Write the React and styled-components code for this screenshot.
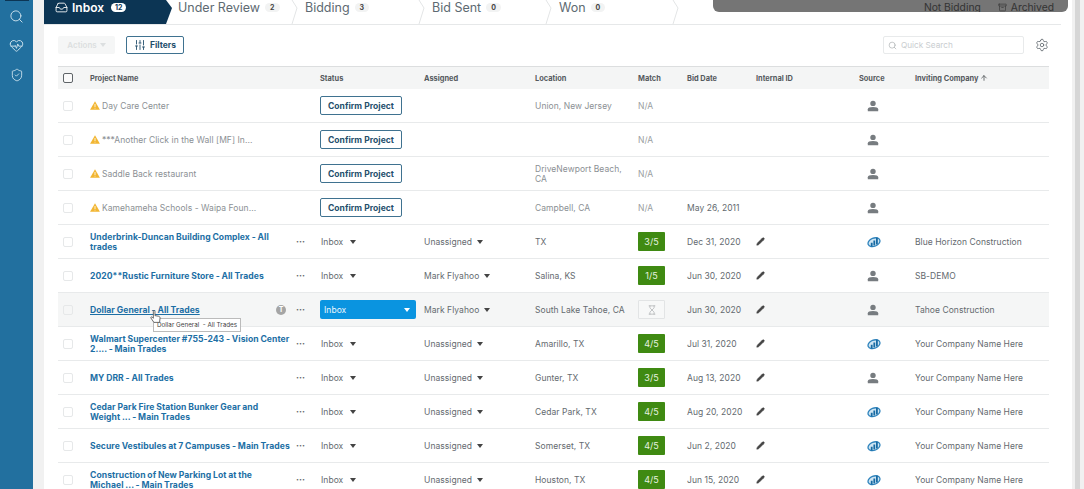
import React from 'react';
import styled, { createGlobalStyle } from 'styled-components';
import { Search, HeartPulse, ShieldCheck, Inbox, SlidersVertical, Settings, Archive, Pencil, Hourglass, ArrowUp } from 'lucide-react';

const GlobalStyle = createGlobalStyle`
  html, body {
    margin: 0;
    height: 100%;
    overflow: hidden;
    background: #f1f1f1;
    font-family: Inter, "Open Sans", sans-serif;
  }
`;

const rowsData = [
  { name: 'Day Care Center', pending: true, location: 'Union, New Jersey', match: 'N/A', source: 'user' },
  { name: '***Another Click in the Wall [MF] In...', pending: true, match: 'N/A', source: 'user' },
  { name: 'Saddle Back restaurant', pending: true, location: 'DriveNewport Beach,\nCA', match: 'N/A', source: 'user' },
  { name: 'Kamehameha Schools - Waipa Foun...', pending: true, location: 'Campbell, CA', match: 'N/A', date: 'May 26, 2011', source: 'user' },
  { name: 'Underbrink-Duncan Building Complex - All\ntrades', assigned: 'Unassigned', location: 'TX', match: '3/5', date: 'Dec 31, 2020', source: 'logo', company: 'Blue Horizon Construction' },
  { name: '2020**Rustic Furniture Store - All Trades', assigned: 'Mark Flyahoo', location: 'Salina, KS', match: '1/5', date: 'Jun 30, 2020', source: 'user', company: 'SB-DEMO' },
  { name: 'Dollar General - All Trades', hovered: true, assigned: 'Mark Flyahoo', location: 'South Lake Tahoe, CA', match: 'wait', date: 'Jun 30, 2020', source: 'user', company: 'Tahoe Construction' },
  { name: 'Walmart Supercenter #755-243 - Vision Center\n2.... - Main Trades', assigned: 'Unassigned', location: 'Amarillo, TX', match: '4/5', date: 'Jul 31, 2020', source: 'logo', company: 'Your Company Name Here' },
  { name: 'MY DRR - All Trades', assigned: 'Unassigned', location: 'Gunter, TX', match: '3/5', date: 'Aug 13, 2020', source: 'user', company: 'Your Company Name Here' },
  { name: 'Cedar Park Fire Station Bunker Gear and\nWeight ... - Main Trades', assigned: 'Unassigned', location: 'Cedar Park, TX', match: '4/5', date: 'Aug 20, 2020', source: 'logo', company: 'Your Company Name Here' },
  { name: 'Secure Vestibules at 7 Campuses - Main Trades', assigned: 'Unassigned', location: 'Somerset, TX', match: '4/5', date: 'Jun 2, 2020', source: 'logo', company: 'Your Company Name Here' },
  { name: 'Construction of New Parking Lot at the\nMichael ... - Main Trades', assigned: 'Unassigned', location: 'Houston, TX', match: '4/5', date: 'Jun 15, 2020', source: 'logo', company: 'Your Company Name Here' },
];

const tabsData = [
  { label: 'Under Review', count: 2 },
  { label: 'Bidding', count: 3 },
  { label: 'Bid Sent', count: 0 },
  { label: 'Won', count: 0 },
];

const columns = '32px 206px 24px 104px 111px 103px 49px 69px 103px 56px 1fr';

const Page = styled.div`
  display: flex;
  width: 1084px;
  height: 489px;
  overflow: hidden;
  position: relative;
`;

const Sidebar = styled.nav`
  width: 33px;
  flex: none;
  background: #22709f;
  color: #cfe3ee;
  display: flex;
  flex-direction: column;
  align-items: center;
  gap: 14.5px;
  box-sizing: border-box;
`;

const SidebarMark = styled.span`
  width: 24px;
  height: 1px;
  background: #0c3554;
  margin-bottom: -7px;
`;

const Main = styled.main`
  margin-left: 11px;
  width: 1028px;
  flex: none;
  background: #fff;
`;

const ScrollRail = styled.div`
  width: 5px;
  flex: none;
  margin-left: 3px;
  background: #d6d6d6;
`;

const TabBar = styled.div`
  display: flex;
  width: 1017px;
  height: 24px;
  border-bottom: 1px solid #e6e8e9;
`;

const ActiveTab = styled.div`
  width: 128px;
  flex: none;
  background: #0c3554;
  color: #fff;
  display: flex;
  align-items: flex-start;
  gap: 4px;
  padding: 0 0 0 11px;
  box-sizing: border-box;
  font-size: 12px;
  line-height: 15px;
  font-weight: 600;
  clip-path: polygon(0 0, 122px 0, 128px 8px, 122px 24px, 0 24px);
`;

const ActiveCount = styled.span`
  background: #fff;
  color: #0c3554;
  border-radius: 7px;
  font-size: 7px;
  line-height: 9px;
  font-weight: 700;
  padding: 0 4px;
  margin: 3px 0 0 3px;
`;

const TabIcon = styled(Inbox)`
  margin-top: 1px;
`;

const Tab = styled.div`
  width: 127px;
  flex: none;
  position: relative;
  display: flex;
  align-items: flex-start;
  gap: 5px;
  padding-left: 6px;
  box-sizing: border-box;
  font-size: 12.5px;
  line-height: 15px;
  color: #5e6a72;
`;

const TabEdge = styled.svg`
  position: absolute;
  right: 0;
  top: 0;
`;

const Count = styled.span`
  background: #f2f3f3;
  color: #444;
  border-radius: 7px;
  font-size: 7px;
  line-height: 9px;
  font-weight: 700;
  padding: 0 5px;
  margin-top: 3px;
`;

const StatusPanel = styled.div`
  position: absolute;
  top: 0;
  left: 713px;
  width: 355px;
  height: 12px;
  background: #757575;
  border-radius: 0 0 6px 6px;
  display: flex;
  justify-content: flex-end;
  align-items: center;
  gap: 17px;
  padding: 2px 14px 0 0;
  box-sizing: border-box;
  font-size: 10.3px;
  line-height: 10px;
  color: #333;
  overflow: hidden;
`;

const PanelItem = styled.span`
  display: flex;
  align-items: center;
  gap: 4px;
`;

const Toolbar = styled.div`
  display: flex;
  align-items: center;
  height: 18px;
  margin: 11px 0 0 14px;
  gap: 11px;
`;

const ActionsButton = styled.div`
  width: 57px;
  height: 18px;
  background: #f5f6f6;
  border-radius: 2px;
  color: #dcdfe0;
  font-size: 8px;
  font-weight: 600;
  display: flex;
  align-items: center;
  justify-content: center;
  gap: 3px;
`;

const FiltersButton = styled.div`
  width: 58px;
  height: 18px;
  border: 1px solid #3f7290;
  border-radius: 2px;
  box-sizing: border-box;
  color: #244f6c;
  font-size: 8.5px;
  font-weight: 700;
  display: flex;
  align-items: center;
  justify-content: center;
  gap: 4px;
`;

const SearchBox = styled.div`
  margin-left: auto;
  width: 141px;
  height: 18px;
  border: 1px solid #e8eaeb;
  border-radius: 2px;
  box-sizing: border-box;
  display: flex;
  align-items: center;
  gap: 4px;
  padding-left: 4px;
  color: #c9cdd0;
  font-size: 8.2px;
`;

const Gear = styled.div`
  width: 14px;
  margin: 0 23px 0 0;
  display: flex;
  color: #5d666c;
`;

const Table = styled.div`
  margin: 12px 14px 0;
  width: 991px;
`;

const HeaderRow = styled.div`
  display: grid;
  grid-template-columns: ${columns};
  align-items: center;
  height: 23px;
  background: #f4f5f5;
  border-top: 1px solid #dcdedf;
  box-sizing: border-box;
  font-size: 7.4px;
  font-weight: 700;
  color: #54595d;
`;

const Row = styled.div`
  display: grid;
  grid-template-columns: ${columns};
  align-items: center;
  height: 34px;
  box-sizing: border-box;
  border-bottom: 1px solid #e8eaeb;
  background: ${p => (p.$hovered ? '#f5f6f6' : '#fff')};
  font-size: 8.5px;
  letter-spacing: 0.05px;
  color: #646a6f;
`;

const Check = styled.span`
  width: 10px;
  height: 10px;
  margin-left: 5px;
  border-radius: 2px;
  display: block;
  box-sizing: border-box;
  border: 1px solid ${p => (p.$strong ? '#5f6468' : '#e6e8e9')};
  background: ${p => (p.$strong ? '#fafafa' : 'transparent')};
`;

const NameCell = styled.div`
  display: flex;
  align-items: center;
  gap: 2px;
  position: relative;
`;

const ProjectLink = styled.a`
  color: #1d6fa5;
  font-size: 8.6px;
  font-weight: 700;
  line-height: 10px;
  word-spacing: -0.3px;
  flex: 1;
  white-space: pre-line;
  text-decoration: ${p => (p.$hovered ? 'underline' : 'none')};
`;

const PendingName = styled.span`
  color: #8b9094;
  white-space: nowrap;
`;

const HintBadge = styled.span`
  width: 10px;
  height: 10px;
  margin-right: 10px;
  border-radius: 50%;
  background: #a5a5a5;
  color: #fff;
  font-size: 7px;
  font-weight: 700;
  display: flex;
  align-items: center;
  justify-content: center;
  flex: none;
`;

const Tooltip = styled.span`
  position: absolute;
  left: 63px;
  top: 13px;
  height: 12px;
  padding: 0 3px;
  background: #fff;
  border: 1px solid #bbb;
  color: #444;
  font-size: 6.3px;
  font-weight: 400;
  letter-spacing: 0;
  line-height: 12px;
  white-space: pre;
  z-index: 2;
`;

const Cursor = styled.svg`
  position: absolute;
  left: 60px;
  top: 5px;
  z-index: 3;
`;

const Dots = styled.span`
  font-size: 9px;
  font-weight: 700;
  color: #666;
  line-height: 1;
  margin-top: -3px;
`;

const ConfirmButton = styled.div`
  width: 82px;
  height: 19px;
  border: 1px solid #3f7290;
  border-radius: 2px;
  box-sizing: border-box;
  color: #244f6c;
  font-size: 8.5px;
  font-weight: 700;
  display: flex;
  align-items: center;
  justify-content: center;
`;

const Select = styled.div`
  display: flex;
  align-items: center;
  gap: 5px;
`;

const StatusLabel = styled.span`
  margin-left: 1px;
  width: 24px;
`;

const Caret = styled.span`
  width: 0;
  height: 0;
  border-left: 3.5px solid transparent;
  border-right: 3.5px solid transparent;
  border-top: 4px solid ${p => p.$color || '#444'};
`;

const StatusSelect = styled.div`
  width: 96px;
  height: 19px;
  background: #0a94e0;
  border-radius: 2px;
  color: #eaf6fd;
  display: flex;
  align-items: center;
  justify-content: space-between;
  padding: 0 6px 0 4px;
  box-sizing: border-box;
`;

const MatchBadge = styled.span`
  width: 27px;
  height: 19px;
  background: #3f8a12;
  border-radius: 1px;
  color: #e8f3e0;
  display: flex;
  align-items: center;
  justify-content: center;
  font-size: 9px;
`;

const WaitBadge = styled(MatchBadge)`
  background: #f7f8f8;
  border: 1px solid #e2e4e5;
  box-sizing: border-box;
  color: #a0a4a7;
`;

const MutedText = styled.span`
  color: #9a9ea1;
`;

const EditIcon = styled.span`
  display: flex;
  color: #444;
`;

const SourceCell = styled.div`
  display: flex;
  padding-left: 8px;
`;

const LocationText = styled.div`
  line-height: 10px;
  white-space: pre-line;
  color: ${p => (p.$muted ? '#8b9094' : '#646a6f')};
`;

const SortLabel = styled.div`
  display: flex;
  align-items: center;
  gap: 2px;
`;

const UserIcon = () => (
  <svg width="12" height="12" viewBox="0 0 12 12">
    <circle cx="6" cy="3.4" r="2.7" fill="#777c80" />
    <path d="M.8 11.2V9.3C.8 7.7 2.6 7 6 7s5.2.7 5.2 2.3v1.900z" fill="#777c80" />
  </svg>
);

const LogoIcon = () => (
  <svg width="14" height="12" viewBox="0 0 14 12">
    <ellipse cx="7" cy="6.2" rx="6.2" ry="4.1" fill="#cfe5f3" stroke="#2f84bd" strokeWidth="1.3" transform="rotate(-22 7 6.2)" />
    <path d="M3.8 10.4V6.8h1.8v3.6zM6.4 9.6V4.600h1.800v5zM9 8.600V1.400h1.800v7.200z" fill="#176aa3" />
  </svg>
);

const Warning = () => (
  <svg width="10" height="9" viewBox="0 0 10 9" style={{ flex: 'none' }}>
    <path d="M5 .2 9.9 8.8H.1z" fill="#f2b632" />
    <path d="M4.6 3h.8v3h-.8zM4.6 6.7h.8v.8h-.8z" fill="#fff" />
  </svg>
);

const HandCursor = () => (
  <Cursor width="11" height="14" viewBox="0 0 10 13">
    <path d="M3 1.2c0-1 1.500-1 1.500 0v4l3.300.6c1 .2 1.500.8 1.400 1.800L8.800 11.500H3.500L.8 7.500c-.5-.9.5-1.500 1.200-.8l1 1z" fill="#fff" stroke="#555" strokeWidth=".8" />
  </Cursor>
);

const ProjectRow = ({ row }) => (
  <Row $hovered={row.hovered}>
    <Check />
    <NameCell>
      {row.pending ? (
        <>
          <Warning />
          <PendingName>{row.name}</PendingName>
        </>
      ) : (
        <>
          <ProjectLink href="#" $hovered={row.hovered}>{row.name}</ProjectLink>
          {row.hovered && <HintBadge>T</HintBadge>}
          {row.hovered && <HandCursor />}
          {row.hovered && <Tooltip>Dollar General  - All Trades</Tooltip>}
        </>
      )}
    </NameCell>
    <div>{!row.pending && <Dots>···</Dots>}</div>
    <div>
      {row.pending ? (
        <ConfirmButton>Confirm Project</ConfirmButton>
      ) : row.hovered ? (
        <StatusSelect>Inbox <Caret $color="#fff" /></StatusSelect>
      ) : (
        <Select><StatusLabel>Inbox</StatusLabel> <Caret /></Select>
      )}
    </div>
    <div>{row.assigned && <Select>{row.assigned} <Caret /></Select>}</div>
    <LocationText $muted={row.pending}>{row.location}</LocationText>
    <div>
      {row.match === 'N/A' ? (
        <MutedText>N/A</MutedText>
      ) : row.match === 'wait' ? (
        <WaitBadge><Hourglass size={10} strokeWidth={1.5} /></WaitBadge>
      ) : (
        <MatchBadge>{row.match}</MatchBadge>
      )}
    </div>
    <div>{row.date}</div>
    <div>
      {!row.pending && (
        <EditIcon><Pencil size={9} fill="currentColor" strokeWidth={1.5} /></EditIcon>
      )}
    </div>
    <SourceCell>{row.source === 'logo' ? <LogoIcon /> : <UserIcon />}</SourceCell>
    <div>{row.company}</div>
  </Row>
);

export default function App() {
  return (
    <Page>
      <GlobalStyle />
      <Sidebar>
        <SidebarMark />
        <Search size={15} strokeWidth={1.5} />
        <HeartPulse size={15} strokeWidth={1.5} />
        <ShieldCheck size={14} strokeWidth={1.5} />
      </Sidebar>
      <Main>
        <TabBar>
          <ActiveTab>
            <TabIcon size={13} strokeWidth={1.6} />
            Inbox
            <ActiveCount>12</ActiveCount>
          </ActiveTab>
          {tabsData.map(tab => (
            <Tab key={tab.label}>
              {tab.label}
              <Count>{tab.count}</Count>
              <TabEdge width="8" height="24" viewBox="0 0 8 24">
                <path d="M1 0 6 8 1 24" fill="none" stroke="#e3e5e6" />
              </TabEdge>
            </Tab>
          ))}
        </TabBar>
        <Toolbar>
          <ActionsButton>Actions <Caret $color="#dcdfe0" /></ActionsButton>
          <FiltersButton><SlidersVertical size={12} strokeWidth={1.8} /> Filters</FiltersButton>
          <SearchBox><Search size={9} strokeWidth={1.5} color="#9a9ea1" /> Quick Search</SearchBox>
          <Gear><Settings size={14} strokeWidth={1.4} /></Gear>
        </Toolbar>
        <Table>
          <HeaderRow>
            <Check $strong />
            <div>Project Name</div>
            <div />
            <div>Status</div>
            <div>Assigned</div>
            <div>Location</div>
            <div>Match</div>
            <div>Bid Date</div>
            <div>Internal ID</div>
            <div>Source</div>
            <SortLabel>Inviting Company <ArrowUp size={8} strokeWidth={2.5} /></SortLabel>
          </HeaderRow>
          {rowsData.map(row => (
            <ProjectRow key={row.name} row={row} />
          ))}
        </Table>
      </Main>
      <ScrollRail />
      <StatusPanel>
        <PanelItem>Not Bidding</PanelItem>
        <PanelItem><Archive size={9} strokeWidth={1.6} /> Archived</PanelItem>
      </StatusPanel>
    </Page>
  );
}
